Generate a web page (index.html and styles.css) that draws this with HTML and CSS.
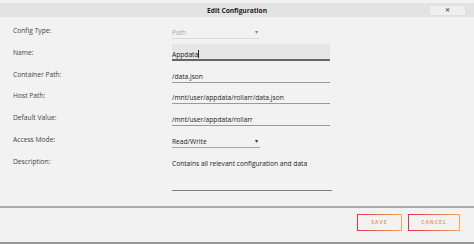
FILE: index.html
```html
<!DOCTYPE html>
<html>
<head>
<meta charset="utf-8">
<link rel="stylesheet" href="styles.css">
</head>
<body>
<div class="dialog">
  <div class="titlebar">
    <span></span>
    <span class="title">Edit Configuration</span>
    <span class="close">✕</span>
  </div>
  <div class="form">
    <div class="row">
      <div class="label">Config Type:</div>
      <div class="field select disabled"><span>Path</span><span class="arrow">▾</span></div>
    </div>
    <div class="row">
      <div class="label">Name:</div>
      <div class="field active"><span>Appdata</span><span class="caret"></span></div>
    </div>
    <div class="row">
      <div class="label">Container Path:</div>
      <div class="field">/data.json</div>
    </div>
    <div class="row">
      <div class="label">Host Path:</div>
      <div class="field">/mnt/user/appdata/rollarr/data.json</div>
    </div>
    <div class="row">
      <div class="label">Default Value:</div>
      <div class="field">/mnt/user/appdata/rollarr</div>
    </div>
    <div class="row">
      <div class="label">Access Mode:</div>
      <div class="field select"><span>Read/Write</span><span class="arrow">▾</span></div>
    </div>
    <div class="row desc-row">
      <div class="label">Description:</div>
      <div class="field textarea">Contains all relevant configuration and data</div>
    </div>
  </div>
  <div class="footer">
    <button class="btn">SAVE</button>
    <button class="btn">CANCEL</button>
  </div>
</div>
</body>
</html>
```
FILE: styles.css
```css
html, body {
  margin: 0;
  padding: 0;
  background: #f2f2f2;
}
body {
  font-family: "Open Sans", "Noto Sans", sans-serif;
  width: 474px;
  height: 244px;
  overflow: hidden;
}
.dialog {
  padding-top: 3px;
}
.titlebar {
  height: 14px;
  background: #e3e3e3;
  display: grid;
  grid-template-columns: 1fr auto 1fr;
  align-items: center;
}
.title {
  font-size: 6.6px;
  font-weight: 700;
  color: #222;
}
.close {
  justify-self: end;
  margin-right: 8px;
  width: 37px;
  height: 11px;
  box-sizing: border-box;
  background: #efefef;
  border: 1px solid #e0e0e0;
  font-size: 5.5px;
  font-weight: 700;
  color: #555;
  display: flex;
  align-items: center;
  justify-content: center;
}
.form {
  padding-top: 6px;
  padding-left: 13px;
}
.row {
  display: grid;
  grid-template-columns: 159px auto;
  height: 21.8px;
}
.label {
  font-size: 6.7px;
  color: #444;
  line-height: 12px;
  padding-top: 2px;
}
.field {
  width: 158px;
  height: 16px;
  box-sizing: border-box;
  border-bottom: 1.5px solid #9a9a9a;
  font-size: 6.65px;
  color: #222;
  line-height: 11px;
  padding-top: 4px;
  display: flex;
  align-items: flex-start;
}
.field.select {
  width: 88px;
  justify-content: space-between;
  border-bottom: 1.5px solid #a5a5a5;
}
.field.select.disabled {
  color: #a8a8a8;
  border-bottom: 1px solid #dcdcdc;
}
.arrow {
  font-size: 6px;
  color: #333;
  margin-right: 2px;
}
.disabled .arrow {
  color: #888;
}
.field.active {
  background: #e6e6e6;
  border-bottom: 2px solid #666;
  height: 17px;
  margin-top: -1px;
  padding-top: 5px;
}
.caret {
  display: inline-block;
  width: 1px;
  height: 8px;
  background: #222;
  margin-top: 1.5px;
}
.desc-row {
  height: 38px;
}
.field.textarea {
  width: 160px;
  height: 37px;
  border-bottom: 1px solid #808080;
}
.footer {
  margin-top: 14px;
  border-top: 2px solid #acacac;
  border-bottom: 2px solid #999;
  height: 38px;
  box-sizing: border-box;
  display: flex;
  justify-content: flex-end;
  align-items: flex-start;
  gap: 6px;
  padding-right: 14px;
  padding-top: 6px;
}
.btn {
  height: 17px;
  box-sizing: border-box;
  background: transparent;
  border: 1.3px solid;
  border-image: linear-gradient(90deg, #d9384f, #f5a55d) 1;
  font-family: "Open Sans", "Noto Sans", sans-serif;
  font-size: 5px;
  font-weight: 700;
  letter-spacing: 1px;
  color: #e89a70;
  padding: 0;
  margin: 0;
}
.btn:first-child {
  width: 45px;
}
.btn:last-child {
  width: 52px;
}
```
